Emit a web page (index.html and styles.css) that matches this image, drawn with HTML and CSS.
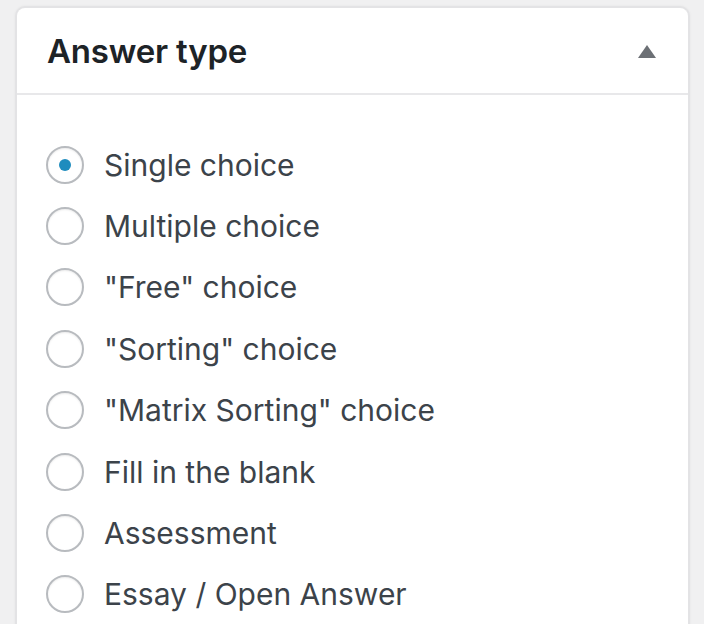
FILE: index.html
```html
<!DOCTYPE html>
<html lang="en">
<head>
<meta charset="utf-8">
<title>Answer type</title>
<link rel="stylesheet" href="styles.css">
</head>
<body>
<div class="page">
  <section class="card">
    <header class="card-head">
      <h2 class="card-title">Answer type</h2>
      <span class="toggle" aria-hidden="true"></span>
    </header>
    <div class="card-body">
      <label class="option"><span class="radio checked"></span><span class="label">Single choice</span></label>
      <label class="option"><span class="radio"></span><span class="label">Multiple choice</span></label>
      <label class="option"><span class="radio"></span><span class="label">"Free" choice</span></label>
      <label class="option"><span class="radio"></span><span class="label">"Sorting" choice</span></label>
      <label class="option"><span class="radio"></span><span class="label">"Matrix Sorting" choice</span></label>
      <label class="option"><span class="radio"></span><span class="label">Fill in the blank</span></label>
      <label class="option"><span class="radio"></span><span class="label">Assessment</span></label>
      <label class="option"><span class="radio"></span><span class="label">Essay / Open Answer</span></label>
    </div>
  </section>
</div>
</body>
</html>
```

FILE: styles.css
```css
html, body {
  margin: 0;
  padding: 0;
  background: #f0f0f1;
  height: 100%;
  overflow: hidden;
}

.page {
  padding: 6px 14px 0 15px;
  font-family: Inter, "Liberation Sans", sans-serif;
}

.card {
  background: #ffffff;
  border: 2px solid #e3e3e5;
  border-bottom: none;
  border-radius: 10px 10px 0 0;
  height: 640px;
  box-shadow: 0 0 3px rgba(0, 0, 0, 0.05);
}

.card-head {
  height: 85px;
  display: flex;
  align-items: center;
  justify-content: space-between;
  padding: 0 32px 0 30px;
  border-bottom: 2px solid #e8e8ea;
}

.card-title {
  margin: 0;
  font-size: 33px;
  font-weight: 600;
  color: #1d2327;
  letter-spacing: -0.2px;
  padding-top: 0;
}

.toggle {
  width: 0;
  height: 0;
  border-left: 9.5px solid transparent;
  border-right: 9.5px solid transparent;
  border-bottom: 13px solid #6c7075;
  margin-top: 2px;
}

.card-body {
  padding: 39px 0 0 29px;
  display: flex;
  flex-direction: column;
}

.option {
  height: 61.4px;
  display: flex;
  align-items: center;
  gap: 20px;
}

.radio {
  width: 38px;
  height: 38px;
  box-sizing: border-box;
  border: 2px solid #b8bbbf;
  border-radius: 50%;
  background: #ffffff;
  box-shadow: inset 0 1px 2px rgba(0, 0, 0, 0.08);
  display: flex;
  align-items: center;
  justify-content: center;
  flex: none;
}

.radio.checked::after {
  content: "";
  width: 12px;
  height: 12px;
  border-radius: 50%;
  background: #1e8cbe;
}

.label {
  font-size: 30px;
  color: #3c434a;
  letter-spacing: 0;
}
```
